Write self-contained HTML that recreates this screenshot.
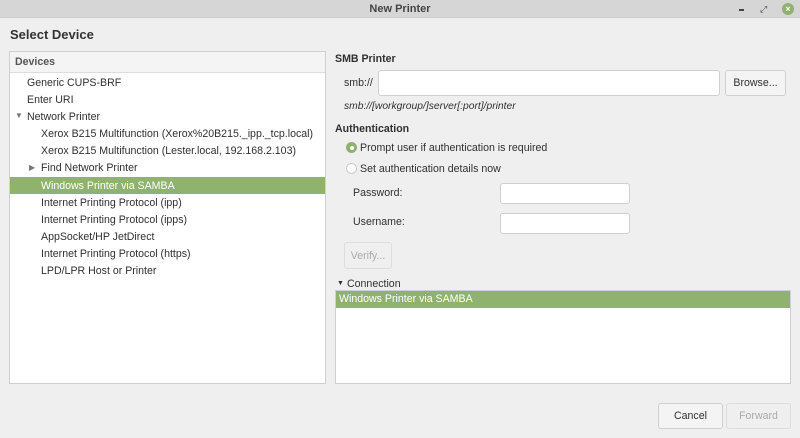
<!DOCTYPE html><html><head><style>
*{box-sizing:border-box;margin:0;padding:0}
body{width:800px;height:438px;background:#efefef;font-family:"Liberation Sans",sans-serif;font-size:10.6px;color:#303030;position:relative;overflow:hidden}
.a{position:absolute;white-space:nowrap}
.entry{position:absolute;background:#fff;border:1px solid #cfcfcf;border-radius:3px}
.btn{position:absolute;border:1px solid #cfcfcf;border-radius:3px;background:#f4f4f4;text-align:center}
.sel{position:absolute;background:#8fb26f;color:#fff}
</style></head><body>
<div class="a" style="left:0;top:0;width:800px;height:18px;background:#d6d6d6;border-bottom:1px solid #ccc"></div>
<div class="a" style="left:0;top:3px;width:800px;text-align:center;font-weight:bold;color:#444;font-size:11px">New Printer</div>
<div class="a" style="left:739px;top:9px;width:5px;height:1.5px;background:#444"></div>
<div class="a" style="left:760px;top:4px;font-size:9px;color:#444">⤢</div>
<div class="a" style="left:782px;top:3px;width:12px;height:12px;border-radius:50%;background:#8fb26f;color:#fff;font-size:9px;text-align:center;line-height:12px;font-weight:bold">×</div>
<div class="a" style="left:10px;top:27px;font-size:13px;font-weight:bold;color:#333">Select Device</div>
<div class="a" style="left:9px;top:51px;width:317px;height:333px;background:#fff;border:1px solid #cfcfcf"></div>
<div class="a" style="left:10px;top:52px;width:315px;height:21px;background:#f4f4f4;border-bottom:1px solid #ddd"></div>
<div class="a" style="left:15px;top:56px;font-weight:bold;color:#555">Devices</div>
<div class="sel" style="left:10px;top:177px;width:315px;height:17px"></div>
<div class="a" style="left:27px;top:77px">Generic CUPS-BRF</div>
<div class="a" style="left:27px;top:94px">Enter URI</div>
<div class="a" style="left:15px;top:111px;font-size:8px;color:#777">▼</div>
<div class="a" style="left:27px;top:111px">Network Printer</div>
<div class="a" style="left:41px;top:128px">Xerox B215 Multifunction (Xerox%20B215._ipp._tcp.local)</div>
<div class="a" style="left:41px;top:145px">Xerox B215 Multifunction (Lester.local, 192.168.2.103)</div>
<div class="a" style="left:29px;top:163px;font-size:8px;color:#777">▶</div>
<div class="a" style="left:41px;top:162px">Find Network Printer</div>
<div class="a" style="left:41px;top:180px;color:#fff">Windows Printer via SAMBA</div>
<div class="a" style="left:41px;top:197px">Internet Printing Protocol (ipp)</div>
<div class="a" style="left:41px;top:214px">Internet Printing Protocol (ipps)</div>
<div class="a" style="left:41px;top:231px">AppSocket/HP JetDirect</div>
<div class="a" style="left:41px;top:248px">Internet Printing Protocol (https)</div>
<div class="a" style="left:41px;top:265px">LPD/LPR Host or Printer</div>

<div class="a" style="left:335px;top:53px;font-weight:bold">SMB Printer</div>
<div class="a" style="left:344px;top:77px">smb://</div>
<div class="entry" style="left:378px;top:70px;width:342px;height:26px"></div>
<div class="btn" style="left:725px;top:70px;width:61px;height:26px;line-height:24px">Browse...</div>
<div class="a" style="left:344px;top:101px;font-style:italic;font-size:10.3px">smb://[workgroup/]server[:port]/printer</div>
<div class="a" style="left:335px;top:123px;font-weight:bold">Authentication</div>
<div class="a" style="left:346px;top:142px;width:11px;height:11px;border-radius:50%;background:#8fb26f"></div>
<div class="a" style="left:349.5px;top:145.5px;width:4px;height:4px;border-radius:50%;background:#fff"></div>
<div class="a" style="left:360px;top:142px">Prompt user if authentication is required</div>
<div class="a" style="left:346px;top:163px;width:11px;height:11px;border-radius:50%;background:#fff;border:1px solid #ccc"></div>
<div class="a" style="left:360px;top:163px">Set authentication details now</div>
<div class="a" style="left:353px;top:187px">Password:</div>
<div class="entry" style="left:500px;top:183px;width:130px;height:21px"></div>
<div class="a" style="left:353px;top:216px">Username:</div>
<div class="entry" style="left:500px;top:213px;width:130px;height:21px"></div>
<div class="btn" style="left:344px;top:242px;width:48px;height:27px;line-height:26px;color:#aaa;background:#efefef;border-color:#ddd">Verify...</div>
<div class="a" style="left:337px;top:280px;font-size:7px">▼</div>
<div class="a" style="left:347px;top:278px">Connection</div>
<div class="a" style="left:335px;top:290px;width:456px;height:94px;background:#fff;border:1px solid #cfcfcf"></div>
<div class="sel" style="left:336px;top:291px;width:454px;height:17px"></div>
<div class="a" style="left:339px;top:293px;color:#fff">Windows Printer via SAMBA</div>
<div class="btn" style="left:658px;top:403px;width:65px;height:26px;line-height:24px">Cancel</div>
<div class="btn" style="left:726px;top:403px;width:65px;height:26px;line-height:24px;color:#aaa;background:#efefef;border-color:#ddd">Forward</div>
</body></html>
